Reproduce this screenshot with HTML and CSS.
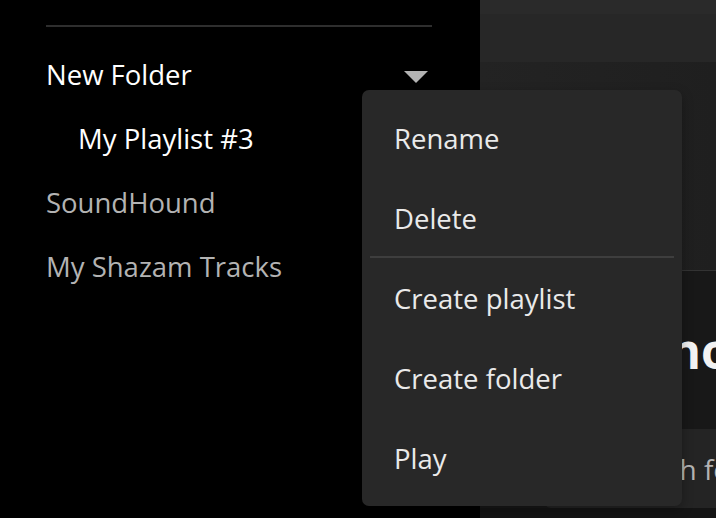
FILE: index.html
```html
<!DOCTYPE html>
<html lang="en">
<head>
<meta charset="utf-8">
<title>Library</title>
<link rel="stylesheet" href="styles.css">
</head>
<body>
<div class="app">
  <aside class="sidebar">
    <div class="divider"></div>
    <ul class="playlists">
      <li class="row folder">
        <span>New Folder</span>
        <svg class="caret" width="24" height="12" viewBox="0 0 24 12" aria-hidden="true"><path d="M0 0H24L12 12Z" fill="#b3b3b3"/></svg>
      </li>
      <li class="row child">My Playlist #3</li>
      <li class="row muted">SoundHound</li>
      <li class="row muted">My Shazam Tracks</li>
    </ul>
  </aside>
  <main class="main">
    <div class="topband"></div>
    <div class="topbar"></div>
    <div class="upper"></div>
    <div class="hero"><h1 class="hero-title">Browse now</h1></div>
    <div class="search-row"><div class="search">Search for something</div></div>
    <div class="foot"></div>
  </main>
</div>
<div class="menu" role="menu">
  <div class="menu-item">Rename</div>
  <div class="menu-item">Delete</div>
  <div class="menu-sep"></div>
  <div class="menu-item">Create playlist</div>
  <div class="menu-item">Create folder</div>
  <div class="menu-item">Play</div>
</div>
</body>
</html>
```

FILE: styles.css
```css
* { box-sizing: border-box; }
html, body { margin: 0; padding: 0; }
body {
  width: 716px;
  height: 518px;
  overflow: hidden;
  background: #000;
  font-family: "Open Sans", "Noto Sans", sans-serif;
  position: relative;
}
.app {
  display: grid;
  grid-template-columns: 480px 236px;
  height: 518px;
}
.sidebar {
  background: #000;
  padding: 25px 48px 0 46px;
}
.divider {
  height: 2px;
  background: #2e2e2e;
}
.playlists {
  list-style: none;
  margin: 15px 0 0;
  padding: 0;
}
.row {
  height: 64px;
  display: flex;
  align-items: center;
  font-size: 27.5px;
  color: #fff;
  padding-left: 0;
  white-space: nowrap;
}
.folder { justify-content: space-between; }
.caret { margin: 6px 4px 0 0; }
.child { padding-left: 32px; }
.muted { color: #b3b3b3; }

.main {
  display: flex;
  flex-direction: column;
  background: #121212;
  overflow: hidden;
}
.topband { height: 14px; background: #2a2a2a; }
.topbar { height: 48px; background: #272727; }
.upper {
  height: 209px;
  background: linear-gradient(90deg, #232323, #1f1f1f);
  border-bottom: 1px solid #333;
}
.hero {
  height: 158px;
  background: #181818;
  display: flex;
  align-items: center;
  overflow: hidden;
}
.hero-title {
  margin: 0;
  font-size: 48px;
  font-weight: 700;
  color: #f2f2f2;
  white-space: nowrap;
}
.search-row {
  height: 79px;
  padding-left: 65px;
  background: #181818;
  overflow: hidden;
}
.search {
  height: 79px;
  background: #242424;
  border-radius: 0 0 0 6px;
  color: #b3b3b3;
  font-size: 28px;
  display: flex;
  align-items: center;
  padding-left: 63px;
  white-space: nowrap;
}
.foot { flex: 1; background: #141414; }

.menu {
  position: absolute;
  left: 362px;
  top: 90px;
  width: 320px;
  height: 416px;
  background: #282828;
  border-radius: 7px;
  padding: 8px;
  display: flex;
  flex-direction: column;
  box-shadow: 0 4px 12px rgba(0,0,0,0.3);
}
.menu-item {
  height: 80px;
  flex: none;
  display: flex;
  align-items: center;
  padding-left: 24px;
  font-size: 27.5px;
  color: #eaeaea;
  white-space: nowrap;
}
.menu-sep {
  flex: none;
  height: 2px;
  background: #3e3e3e;
  margin-top: -2px;
}
```
